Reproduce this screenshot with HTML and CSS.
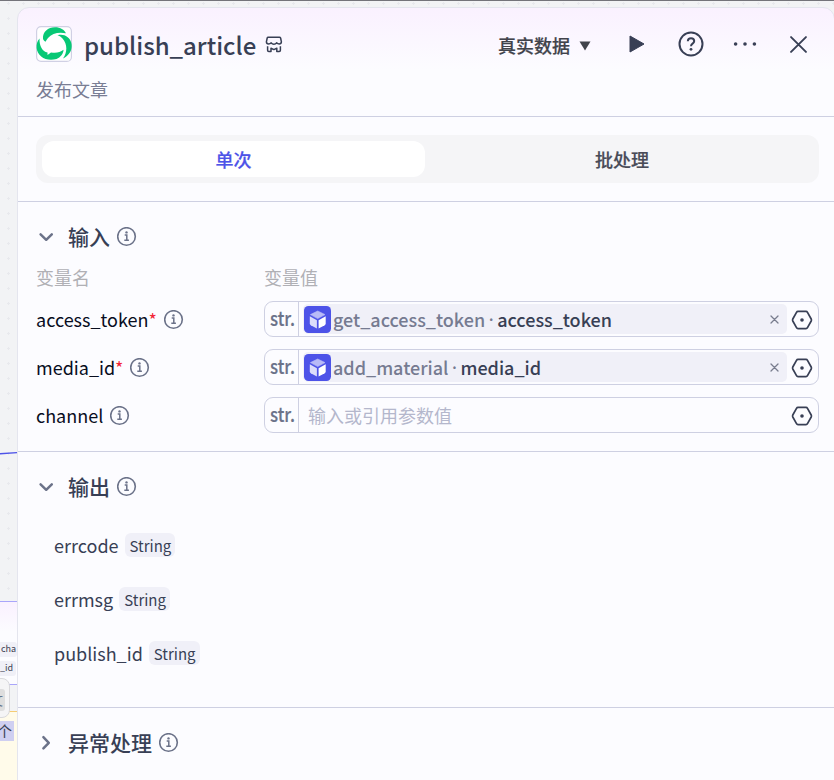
FILE: index.html
```html
<!DOCTYPE html>
<html lang="zh-CN">
<head>
  <meta charset="UTF-8">
  <meta name="viewport" content="width=device-width, initial-scale=1.0">
  <title>publish_article</title>
  <link rel="stylesheet" href="styles.css">
</head>
<body>
  <svg class="defs" width="0" height="0">
    <symbol id="info" viewBox="0 0 20 20">
      <circle cx="9.500" cy="9.500" r="8.8" fill="none" stroke="currentColor" stroke-width="1.6"/>
      <path d="M7.7 8.1H9.8V13.1M7.3 13.3H11.9" fill="none" stroke="currentColor" stroke-width="1.5"/>
      <circle cx="9.5" cy="5.4" r="1.2" fill="currentColor"/>
    </symbol>
    <symbol id="chevron" viewBox="0 0 16 16">
      <path d="M2.600 5.400L8.200 10.800L13.800 5.400" fill="none" stroke="currentColor" stroke-width="2.5" stroke-linecap="round" stroke-linejoin="round"/>
    </symbol>
    <symbol id="cube" viewBox="0 0 27 27">
      <rect width="27" height="27" rx="4.5" fill="#4d53e8"/>
      <path d="M13.7 5L21 8.6L13.7 12.6L6.4 8.6Z" fill="#b8baf7" stroke="#b8baf7" stroke-width=".6" stroke-linejoin="round"/>
      <path d="M5.8 10.3L12.9 14.2V22.5L6.8 19.2Q5.8 18.6 5.8 17.6Z" fill="#dcddfb"/>
      <path d="M21.7 10.3L14.6 14.2V22.5L20.7 19.2Q21.7 18.6 21.7 17.6Z" fill="#fff"/>
    </symbol>
    <symbol id="hexagon" viewBox="0 0 22 20">
      <path d="M7 1.4H15Q16 1.4 16.5 2.3L20.2 9Q20.7 10 20.2 11L16.5 17.7Q16 18.6 15 18.6H7Q6 18.6 5.5 17.7L1.8 11Q1.3 10 1.8 9L5.5 2.3Q6 1.4 7 1.4Z" fill="none" stroke="currentColor" stroke-width="1.7"/>
      <circle cx="11" cy="10" r="1.8" fill="currentColor"/>
    </symbol>
    <symbol id="cross" viewBox="0 0 16 16">
      <path d="M1 1L15 15M15 1L1 15" fill="none" stroke="currentColor" stroke-width="1.8" stroke-linecap="round"/>
    </symbol>
    <symbol id="cross-small" viewBox="0 0 9 9">
      <path d="M1 1L8 8M8 1L1 8" fill="none" stroke="currentColor" stroke-width="1.3" stroke-linecap="round"/>
    </symbol>
  </svg>

  <div class="canvas">
    <svg class="edge" width="18" height="4" viewBox="0 0 18 4"><path d="M0 2.8L18 1.6" stroke="#4d53e8" stroke-width="1.4"/></svg>
    <div class="node">
      <span class="node-tag tag-cut">cha</span>
      <span class="node-tag">_id</span>
    </div>
    <div class="note"><span class="note-text">个</span></div>
    <div class="tool"><span class="tool-inner">文</span></div>
  </div>

  <main class="panel">
    <header class="header">
      <div class="title-row">
        <svg class="logo" width="36" height="36" viewBox="0 0 36 36">
          <rect x=".6" y=".6" width="34.8" height="34.8" rx="4.5" fill="#fff" stroke="#d0d0e4" stroke-width="1.2"/>
          <path d="M7 12.5C6.5 6 12 1.2 19 1.2C24.5 1.2 28.2 3.5 30 7.3C23 5.7 16 7.2 12 12C11 13.2 10.5 14.5 9.5 15.7C8 14.8 7.2 14 7 12.5Z" fill="#07c875"/>
          <path d="M21.5 9.3C28 7.5 33.5 11 35.2 16.5C37 23.5 33.5 29.5 27 32.5C31.5 26 31.5 18 26.5 12.5C25.2 11 23.5 10 21.5 9.3Z" fill="#07c875"/>
          <path d="M3.5 12.5C3.2 20 6.5 25.8 11.5 26.6V29L15 26.5C20 27.3 24 26.7 27.5 23.8C27.5 27.5 24.5 31.5 20.5 33C10.5 36 1.5 30.5 .6 22C.3 18 1.3 15 3.5 12.5Z" fill="#07c875"/>
        </svg>
        <h1>publish_article</h1>
        <svg class="store" width="18" height="17" viewBox="0 0 18 17" fill="none" stroke="#383f55" stroke-width="1.5" stroke-linejoin="round">
          <path d="M3.2 1.2H14.4Q15.3 1.2 15.6 2L16.4 5.8Q16.4 8 14.2 8Q12.6 8 11.6 6.8Q10.6 8.3 8.9 8.3Q7.2 8.3 6.2 6.8Q5.2 8 3.6 8Q1.4 8 1.4 5.8L2.2 2Q2.4 1.2 3.2 1.2Z"/>
          <path d="M2.6 10.2V14.2Q2.6 15.4 3.8 15.4H6V12.2L8.9 13.6L11.8 12.2V15.4H14.2Q15.4 15.4 15.4 14.2V10.2"/>
        </svg>
        <div class="actions">
          <span class="source">真实数据</span>
          <svg class="caret" width="12" height="10" viewBox="0 0 12 10"><path d="M.5 .5H11.5L6 9.5Z" fill="#41434b"/></svg>
          <svg class="play" width="16" height="18" viewBox="0 0 16 18"><path d="M1 1L15 9L1 17Z" fill="#383f55" stroke="#383f55" stroke-linejoin="round"/></svg>
          <svg class="help" width="26" height="26" viewBox="0 0 26 26" fill="none" stroke="#383f55" stroke-width="2">
            <circle cx="13" cy="13" r="11.5"/>
            <path d="M9.8 10.3Q9.9 7.2 13 7.2Q16.2 7.2 16.2 10Q16.2 11.3 14.8 12.4Q13 13.7 13 15.3"/>
            <circle cx="13" cy="18.3" r="1.4" fill="#383f55" stroke="none"/>
          </svg>
          <svg class="more" width="24" height="6" viewBox="0 0 24 6" fill="#383f55"><circle cx="2.6" cy="3" r="1.8"/><circle cx="12" cy="3" r="1.8"/><circle cx="21.4" cy="3" r="1.8"/></svg>
          <svg class="close" width="17" height="17"><use href="#cross"/></svg>
        </div>
      </div>
      <p class="desc">发布文章</p>
    </header>

    <div class="mode">
      <div class="tabs">
        <button class="tab active">单次</button>
        <button class="tab">批处理</button>
      </div>
    </div>

    <section class="inputs">
      <div class="section-title">
        <svg class="chevron" width="16" height="16"><use href="#chevron"/></svg>
        <h2>输入</h2>
        <svg class="info" width="20" height="20"><use href="#info"/></svg>
      </div>
      <div class="row row-head">
        <span>变量名</span>
        <span>变量值</span>
      </div>
      <div class="row">
        <div class="name">access_token<i>*</i><svg class="info" width="20" height="20"><use href="#info"/></svg></div>
        <div class="field">
          <span class="type"><b>str.</b></span>
          <div class="ref">
            <svg width="27" height="27"><use href="#cube"/></svg>
            <span class="ref-node">get_access_token</span><span class="dot">·</span><span class="ref-var">access_token</span>
            <svg class="clear" width="9" height="9"><use href="#cross-small"/></svg>
          </div>
          <svg class="hexagon" width="22" height="20"><use href="#hexagon"/></svg>
        </div>
      </div>
      <div class="row">
        <div class="name">media_id<i>*</i><svg class="info" width="20" height="20"><use href="#info"/></svg></div>
        <div class="field">
          <span class="type"><b>str.</b></span>
          <div class="ref">
            <svg width="27" height="27"><use href="#cube"/></svg>
            <span class="ref-node">add_material</span><span class="dot">·</span><span class="ref-var">media_id</span>
            <svg class="clear" width="9" height="9"><use href="#cross-small"/></svg>
          </div>
          <svg class="hexagon" width="22" height="20"><use href="#hexagon"/></svg>
        </div>
      </div>
      <div class="row">
        <div class="name">channel<svg class="info" width="20" height="20"><use href="#info"/></svg></div>
        <div class="field">
          <span class="type"><b>str.</b></span>
          <span class="placeholder">输入或引用参数值</span>
          <svg class="hexagon" width="22" height="20"><use href="#hexagon"/></svg>
        </div>
      </div>
    </section>

    <section class="outputs">
      <div class="section-title">
        <svg class="chevron" width="16" height="16"><use href="#chevron"/></svg>
        <h2>输出</h2>
        <svg class="info" width="20" height="20"><use href="#info"/></svg>
      </div>
      <ul>
        <li>errcode<span class="badge">String</span></li>
        <li>errmsg<span class="badge">String</span></li>
        <li>publish_id<span class="badge">String</span></li>
      </ul>
    </section>

    <section class="errors">
      <div class="section-title">
        <svg class="chevron closed" width="16" height="16"><use href="#chevron"/></svg>
        <h2>异常处理</h2>
        <svg class="info" width="20" height="20"><use href="#info"/></svg>
      </div>
    </section>
  </main>
</body>
</html>
```
FILE: styles.css
```css
* {
  box-sizing: border-box;
}

body {
  margin: 0;
  width: 834px;
  height: 780px;
  position: relative;
  overflow: hidden;
  border-top: 1px solid #74747a;
  padding: 6px 0 0 17px;
  background-color: #f2f3f5;
  background-image: radial-gradient(circle, #e8e9ed 1px, transparent 1.3px);
  background-size: 15px 15px;
  background-position: 1px -4px;
  font-family: "Noto Sans CJK SC", sans-serif;
  font-size: 18px;
  color: #383f55;
}

svg {
  display: block;
  flex: none;
}

.defs {
  position: absolute;
}

h1, h2, p, ul {
  margin: 0;
  padding: 0;
}

/* workflow canvas behind the panel */
.canvas {
  position: absolute;
  left: 0;
  top: 0;
  width: 17px;
  height: 779px;
  overflow: hidden;
}

.edge {
  position: absolute;
  left: 0;
  top: 450px;
}

.node {
  position: absolute;
  left: 0;
  top: 600px;
  width: 17px;
  height: 84px;
  padding-top: 40px;
  border-top: 1px solid #a9a5fa;
  border-bottom: 1px solid #a9a5fa;
  background: linear-gradient(#faf1ff, #fcfcff 30px);
}

.node-tag {
  display: block;
  width: 16px;
  height: 15px;
  margin-bottom: 4px;
  border-radius: 0 3px 3px 0;
  background-color: #f0f0f7;
  font-size: 9px;
  line-height: 14px;
  color: #3c4052;
}

.tag-cut {
  width: 17px;
  text-indent: 1px;
}

.note {
  position: absolute;
  left: 0;
  top: 710px;
  width: 17px;
  height: 70px;
  padding-top: 9px;
  border-top: 1px solid #f5cc75;
  background-color: #fffbea;
}

.note-text {
  display: block;
  width: 14px;
  height: 20px;
  background-color: #cfcff1;
  font-size: 15px;
  line-height: 20px;
  text-indent: -3px;
}

.tool {
  position: absolute;
  left: -20px;
  top: 677px;
  width: 30px;
  height: 40px;
  padding: 10px 4px 0 0;
  border: 1px solid #d9d9dc;
  border-radius: 8px;
  background-color: #f5f5f6;
}

.tool-inner {
  display: block;
  height: 22px;
  padding-right: 2px;
  background-color: #dedede;
  border-radius: 3px;
  font-size: 14px;
  line-height: 21px;
  text-align: right;
  color: #64748b;
}

/* panel */
.panel {
  position: relative;
  width: 818px;
  height: 790px;
  border: 1px solid #e4e5ee;
  border-radius: 12px;
  background: linear-gradient(#faf1ff, #fcfcff 62px);
}

.header {
  height: 109px;
  padding: 18px 17px 0 18px;
  border-bottom: 1px solid #ced0e2;
}

.title-row {
  display: flex;
  align-items: center;
  height: 36px;
}

h1 {
  margin-left: 12px;
  padding-top: 1px;
  font-size: 24px;
  font-weight: 500;
  line-height: 36px;
}

.store {
  margin-left: 9px;
}

.actions {
  display: flex;
  align-items: center;
  margin-left: auto;
}

.source {
  font-weight: 500;
  -webkit-text-stroke: 0.2px;
  color: #41434b;
  padding-top: 2px;
}

.caret {
  margin: 4px 0 0 9px;
}

.play {
  margin-left: 38px;
}

.help {
  margin-left: 33px;
}

.more {
  margin-left: 29px;
}

.close {
  margin: 0 10px 0 33px;
}

.desc {
  margin-top: 14px;
  line-height: 27px;
  color: #797d94;
}

.mode {
  height: 85px;
  padding: 18px 14px 0 18px;
  border-bottom: 1px solid #ced0e2;
}

.tabs {
  display: grid;
  grid-template-columns: 383px 1fr;
  gap: 6px;
  width: 783px;
  height: 48px;
  padding: 6px;
  border-radius: 12px;
  background-color: #f5f5f7;
}

.tab {
  border: none;
  border-radius: 12px;
  padding: 0;
  background: none;
  font: inherit;
  font-weight: 500;
  -webkit-text-stroke: 0.2px;
  color: #484b57;
}

.tab.active {
  background-color: #fff;
  color: #4d53e8;
}

section {
  padding: 0 14px 0 18px;
  border-bottom: 1px solid #ced0e2;
}

.inputs {
  height: 250px;
  padding-top: 20px;
}

.section-title {
  display: flex;
  align-items: center;
  height: 30px;
  padding-left: 2px;
}

h2 {
  margin: -3px 0 0 14px;
  font-size: 21px;
  font-weight: 500;
  line-height: 30px;
}

.section-title .info {
  margin: 0 0 0 7px;
}

.info,
.chevron {
  color: #6b7289;
}

.closed {
  transform: rotate(-90deg);
}

.row {
  display: grid;
  grid-template-columns: 228px 555px;
  align-items: center;
  height: 36px;
  margin-bottom: 12px;
}

.row-head {
  height: 27px;
  margin: 11px 0 11px;
  color: #b0b0b5;
}

.name {
  display: flex;
  align-items: center;
  font-size: 18px;
  color: #080d1e;
}

.name i {
  font-style: normal;
  color: #f22435;
}

.name .info {
  margin: 1px 0 0 7px;
}

.field {
  display: flex;
  align-items: center;
  height: 36px;
  padding-right: 5px;
  border: 1px solid #ced0e2;
  border-radius: 9px;
}

.type {
  width: 34px;
  height: 34px;
  padding-left: 5px;
  border-right: 1px solid #ced0e2;
  font-size: 20px;
  line-height: 32px;
  color: #6b7289;
}

/* narrow type label */
.type b {
  display: inline-block;
  font-weight: 500;
  -webkit-text-stroke: 0.2px;
  transform: scaleX(0.84);
  transform-origin: left;
}

.ref {
  display: flex;
  align-items: center;
  flex: 1;
  height: 30px;
  margin: 0 4px 0 4px;
  padding: 0 8px 0 1px;
  border-radius: 5px;
  background-color: #f0f0f8;
  font-size: 18px;
  font-weight: 500;
}

.ref-node {
  margin-left: 2px;
  color: #767b91;
}

.dot {
  width: 12px;
  font-family: "Noto Sans", sans-serif;
  text-align: center;
  color: #767b91;
}

.clear {
  margin-left: auto;
  color: #797d8e;
}

.hexagon {
  margin-top: 1px;
}

.placeholder {
  flex: 1;
  padding-left: 9px;
  color: #b4b7cc;
}

.outputs {
  height: 256px;
  padding-top: 20px;
}

ul {
  list-style: none;
  padding: 16px 0 0 18px;
}

li {
  display: flex;
  align-items: center;
  height: 54px;
  font-size: 18px;
}

.badge {
  height: 24px;
  margin-left: 6px;
  padding: 0 4px 0 5px;
  border-radius: 6px;
  background-color: #f0f0f8;
  font-size: 15px;
  line-height: 26px;
}

.errors {
  padding-top: 20px;
  border-bottom: none;
}
```
